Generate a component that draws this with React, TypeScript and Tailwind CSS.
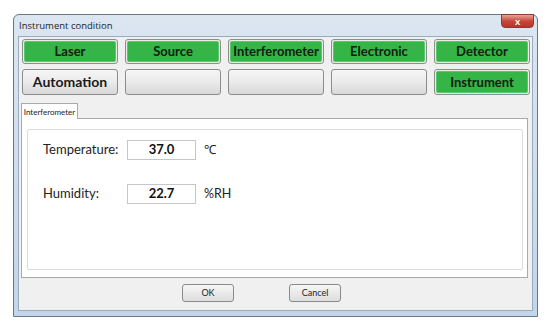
import React from 'react';

const font = { fontFamily: 'Lato, "Open Sans", sans-serif' };

const GreenButton: React.FC<{ label: string }> = ({ label }) => (
  <div className="h-full rounded-[3px] border border-[#8a8f8a] p-px bg-[#e9ece9]">
    <div className="h-full rounded-[2px] bg-[#35b447] border border-[#5cc66a] flex items-center justify-center text-[13px] font-bold text-[#102010] leading-none">
      {label}
    </div>
  </div>
);

const GrayButton: React.FC<{ label?: string }> = ({ label }) => (
  <div className="h-full rounded-[3px] border border-[#8c8c8c] bg-gradient-to-b from-[#f5f5f5] via-[#ebebeb] to-[#d8d8d8] flex items-center justify-center text-[14px] font-bold text-[#1a1a1a] leading-none">
    {label}
  </div>
);

const SmallButton: React.FC<{ label: string }> = ({ label }) => (
  <div className="w-[52px] h-[18px] rounded-[3px] border border-[#8a8a8a] bg-gradient-to-b from-[#f6f6f6] to-[#dedede] flex items-center justify-center text-[9px] text-[#222]">
    {label}
  </div>
);

const Field: React.FC<{ label: string; value: string; unit: string }> = ({ label, value, unit }) => (
  <div className="flex items-center h-[20px]">
    <span className="w-[84px] text-[13px] text-[#222]">{label}</span>
    <div className="w-[69px] h-[20px] border border-[#c4c6cb] bg-white flex items-center justify-center text-[13px] font-bold text-[#111]">
      {value}
    </div>
    <span className="ml-[8px] text-[12.5px] text-[#222]">{unit}</span>
  </div>
);

const App: React.FC = () => {
  return (
    <div className="w-[555px] h-[332px] bg-white pt-[14px] pl-[13px]" style={font}>
      {/* Window frame */}
      <div className="w-[525px] h-[303px] rounded-t-[6px] border border-[#6b7684] bg-gradient-to-b from-[#dbe6f1] to-[#c3d5e9] flex flex-col px-[4px] pb-[5px]">
        {/* Title bar */}
        <div className="h-[21px] flex items-start justify-between">
          <span className="mt-[4px] ml-[1px] text-[10px] text-[#1e1e1e]" style={{ fontFamily: '"Open Sans", sans-serif', fontSize: '9.5px' }}>Instrument condition</span>
          <div className="w-[33px] h-[14px] -mt-px mr-[-1px] rounded-b-[4px] border border-[#8a3a33] bg-gradient-to-b from-[#e8a296] via-[#c9463a] to-[#b8352a] flex items-center justify-center text-white text-[10px] font-bold leading-none">
            x
          </div>
        </div>

        {/* Client area */}
        <div className="flex-1 bg-[#f0f0f0] border border-[#9aabc0] flex flex-col pt-[2px] pl-[3px] pr-[2px]">
          <div className="grid grid-cols-5 gap-x-[7px] gap-y-[5px]">
            <div className="h-[25px]"><GreenButton label="Laser" /></div>
            <div className="h-[25px]"><GreenButton label="Source" /></div>
            <div className="h-[25px]"><GreenButton label="Interferometer" /></div>
            <div className="h-[25px]"><GreenButton label="Electronic" /></div>
            <div className="h-[25px]"><GreenButton label="Detector" /></div>
            <div className="h-[26px]"><GrayButton label="Automation" /></div>
            <div className="h-[26px]"><GrayButton /></div>
            <div className="h-[26px]"><GrayButton /></div>
            <div className="h-[26px]"><GrayButton /></div>
            <div className="h-[26px]"><GreenButton label="Instrument" /></div>
          </div>

          {/* Tab control */}
          <div className="mt-[8px] mr-[2px] -ml-px flex flex-col">
            <div className="flex">
              <div className="w-[57px] h-[16px] -mb-px z-10 bg-white border border-b-0 border-[#a9a9a9] flex items-center justify-center text-[8px] text-[#222]">
                Interferometer
              </div>
            </div>
            <div className="h-[160px] bg-white border border-[#a9a9a9] pt-[10px] pl-[5px] pr-[4px] pb-[7px]">
              <div className="h-full border border-[#dcdcdc] rounded-[2px] pt-[10px] pl-[15px] flex flex-col gap-[24px]">
                <Field label="Temperature:" value="37.0" unit="℃" />
                <Field label="Humidity:" value="22.7" unit="%RH" />
              </div>
            </div>
          </div>

          {/* Dialog buttons */}
          <div className="mt-[6px] flex pl-[160px] gap-[55px]">
            <SmallButton label="OK" />
            <SmallButton label="Cancel" />
          </div>
        </div>
      </div>
    </div>
  );
};

export default App;
